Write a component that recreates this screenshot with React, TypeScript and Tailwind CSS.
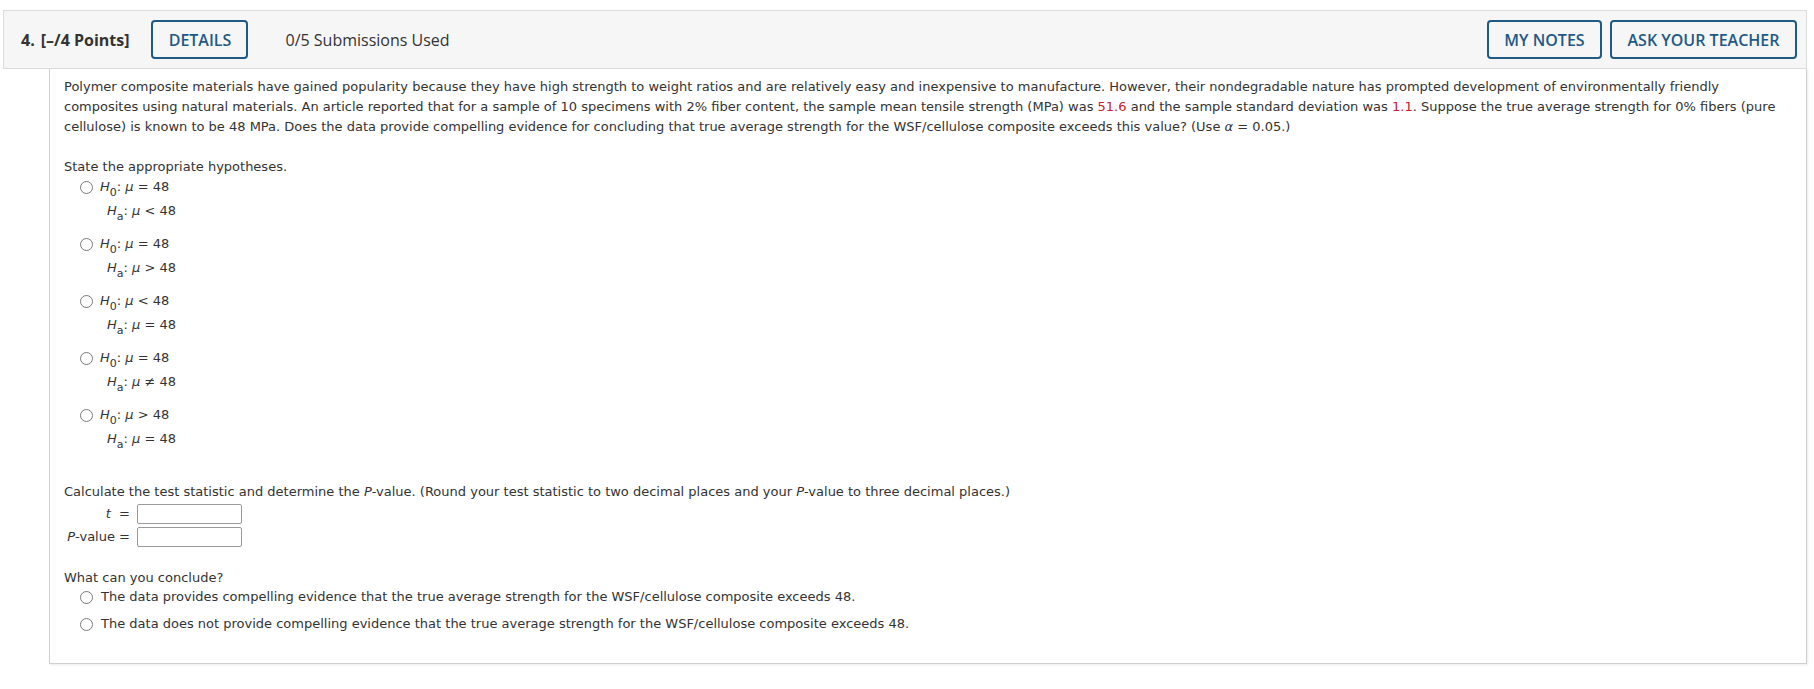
import React from 'react';

type Hyp = { h0: string; ha: string };

const hypotheses: Hyp[] = [
  { h0: '= 48', ha: '< 48' },
  { h0: '= 48', ha: '> 48' },
  { h0: '< 48', ha: '= 48' },
  { h0: '= 48', ha: '≠ 48' },
  { h0: '> 48', ha: '= 48' },
];

const conclusions = [
  'The data provides compelling evidence that the true average strength for the WSF/cellulose composite exceeds 48.',
  'The data does not provide compelling evidence that the true average strength for the WSF/cellulose composite exceeds 48.',
];

const Radio = ({ className = '' }: { className?: string }) => (
  <span
    className={
      'inline-block w-[13px] h-[13px] shrink-0 rounded-full border border-[#7a7a7a] bg-white ' + className
    }
  />
);

// H with a lowered subscript, like the original's H₀ / Hₐ
const HSub = ({ sub }: { sub: string }) => (
  <>
    <i>H</i>
    <span className="relative top-[5px] text-[11px] leading-none">{sub}</span>
  </>
);

const HeaderButton = ({ label, width }: { label: string; width: string }) => (
  <button
    className={
      'h-[39px] rounded-[4px] border-2 border-[#1f5a85] bg-transparent text-[16px] font-semibold text-[#1f5a85] ' +
      width
    }
  >
    {label}
  </button>
);

export default function App() {
  return (
    <div className="min-h-[689px] bg-white pt-[10px] pl-[3px] pr-[7px]">
      {/* question header */}
      <div className="flex h-[59px] items-center border border-[#dcdcdc] bg-[#f6f6f6] pl-[17px] pr-[9px] font-['Open_Sans',sans-serif] text-[16px] text-[#333]">
        <span className="font-bold">4.</span>
        <span className="ml-[6px] font-bold">[–/4 Points]</span>
        <div className="ml-[22px]">
          <HeaderButton label="DETAILS" width="w-[97px]" />
        </div>
        <span className="ml-[37px]">0/5 Submissions Used</span>
        <div className="ml-auto flex gap-[8px]">
          <HeaderButton label="MY NOTES" width="w-[115px]" />
          <HeaderButton label="ASK YOUR TEACHER" width="w-[187px]" />
        </div>
      </div>

      {/* question body */}
      <div className="ml-[46px] border-x border-b border-[#cfcfcf] pt-[8px] pb-[27px] pl-[14px] pr-[12px] font-['DejaVu_Sans',Verdana,sans-serif] text-[13px] leading-[20px] text-[#333] shadow-[1px_1px_2px_rgba(0,0,0,0.08)]">
        <p>
          Polymer composite materials have gained popularity because they have high strength to weight ratios and are
          relatively easy and inexpensive to manufacture. However, their nondegradable nature has prompted development
          of environmentally friendly
          <br />
          composites using natural materials. An article reported that for a sample of 10 specimens with 2% fiber
          content, the sample mean tensile strength (MPa) was <span className="text-[#c8202c]">51.6</span> and the
          sample standard deviation was <span className="text-[#c8202c]">1.1</span>. Suppose the true average strength
          for 0% fibers (pure
          <br />
          cellulose) is known to be 48 MPa. Does the data provide compelling evidence for concluding that true average
          strength for the WSF/cellulose composite exceeds this value? (Use <i>α</i> = 0.05.)
        </p>

        <p className="mt-[20px]">State the appropriate hypotheses.</p>
        <div className="-mt-[2px] flex flex-col gap-[9px]">
          {hypotheses.map((h, i) => (
            <div key={i} className="flex items-start">
              <Radio className="ml-[16px] mt-[6px]" />
              <div className="ml-[7px] leading-[24px]">
                <div className="h-[24px]">
                  <HSub sub="0" />: <i>μ</i> {h.h0}
                </div>
                <div className="h-[24px] pl-[7px]">
                  <HSub sub="a" />: <i>μ</i> {h.ha}
                </div>
              </div>
            </div>
          ))}
        </div>

        <p className="mt-[31px]">
          Calculate the test statistic and determine the <i>P</i>-value. (Round your test statistic to two decimal
          places and your <i>P</i>-value to three decimal places.)
        </p>
        <div className="flex flex-col">
          <div className="flex h-[23px] items-center">
            <span className="w-[66px] shrink-0 whitespace-nowrap text-right">
              <i>t</i>&nbsp; =
            </span>
            <span className="ml-[7px] h-[20px] w-[105px] rounded-[2px] border border-[#9a9a9a] bg-white" />
          </div>
          <div className="flex h-[23px] items-center">
            <span className="w-[66px] shrink-0 whitespace-nowrap text-right">
              <i>P</i>-value =
            </span>
            <span className="ml-[7px] h-[20px] w-[105px] rounded-[2px] border border-[#9a9a9a] bg-white" />
          </div>
        </div>

        <p className="mt-[20px]">What can you conclude?</p>
        <div className="-mt-[3px] flex flex-col gap-[3px]">
          {conclusions.map((c) => (
            <div key={c} className="flex h-[24px] items-center">
              <Radio className="ml-[16px]" />
              <span className="ml-[8px]">{c}</span>
            </div>
          ))}
        </div>
      </div>
    </div>
  );
}
